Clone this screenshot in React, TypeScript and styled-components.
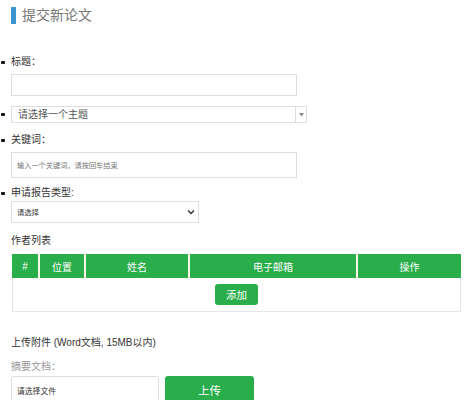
import React from "react";
import styled, { createGlobalStyle } from "styled-components";

const GlobalStyle = createGlobalStyle`
    html, body {
        margin: 0;
        padding: 0;
        background: #fff;
        font-family: "Liberation Sans", "Noto Sans CJK SC", sans-serif;
        color: #333;
    }
`;

const GREEN = "#2aad4b";

const Page = styled.div`
    width: 474px;
    height: 400px;
    overflow: hidden;
    padding: 0 0 0 11px;
    box-sizing: border-box;
`;

const Heading = styled.h2`
    display: flex;
    align-items: center;
    margin: 0;
    padding-top: 6px;
    height: 18px;
    font-size: 14px;
    font-weight: 400;
    color: #777;
    line-height: 18px;
    &::before {
        content: "";
        display: block;
        width: 5px;
        height: 17px;
        background: #3a95cf;
        margin-right: 6px;
    }
`;

const FieldList = styled.ul`
    margin: 29px 0 0 0;
    padding: 0;
    list-style: none;
`;

const Field = styled.li<{ $gap?: number; $dot: number }>`
    position: relative;
    margin-top: ${(p) => p.$gap ?? 0}px;
    &::before {
        content: "";
        position: absolute;
        left: -10px;
        top: ${(p) => p.$dot}px;
        width: 4px;
        height: 3px;
        border-radius: 1px;
        background: #111;
    }
`;

const Label = styled.div<{ $lh?: number }>`
    font-size: 10px;
    line-height: ${(p) => p.$lh ?? 18}px;
    color: #333;
`;

const TextBox = styled.div<{ $h: number; $w: number }>`
    box-sizing: border-box;
    width: ${(p) => p.$w}px;
    height: ${(p) => p.$h}px;
    margin-top: 3px;
    border: 1px solid #ddd;
    display: flex;
    align-items: center;
    padding-left: 5px;
    font-size: 7.2px;
    color: #777;
`;

const ThemeSelect = styled.div`
    box-sizing: border-box;
    width: 296px;
    height: 17px;
    border: 1px solid #ddd;
    display: flex;
    align-items: center;
    font-size: 10px;
    line-height: 15px;
    color: #555;
`;

const ThemeText = styled.span`
    flex: 1;
    padding-left: 6px;
`;

const ThemeArrow = styled.span`
    width: 10px;
    height: 100%;
    border-left: 1px solid #ddd;
    display: flex;
    align-items: center;
    justify-content: center;
`;

const NativeSelect = styled.div`
    box-sizing: border-box;
    width: 188px;
    height: 22px;
    margin-top: 1px;
    border: 1px solid #ddd;
    display: flex;
    align-items: center;
    justify-content: space-between;
    padding: 0 3px 0 5px;
    font-size: 7.3px;
    color: #333;
`;

const Section = styled.div<{ $top: number }>`
    margin-top: ${(p) => p.$top}px;
    font-size: 10px;
    line-height: 16px;
    color: #333;
`;

const Table = styled.div`
    width: 449px;
    margin: 5px 0 0 1px;
    border: 1px solid #e6e6e6;
    border-top: none;
    box-sizing: border-box;
`;

const HeadRow = styled.div`
    display: grid;
    grid-template-columns: 26px 44px 102px 166px 1fr;
    column-gap: 2px;
    background: #f8f6e6;
    height: 24px;
    margin: 0 -1px;
`;

const HeadCell = styled.div`
    background: ${GREEN};
    color: #fff;
    font-size: 10px;
    display: flex;
    align-items: center;
    justify-content: center;
`;

const BodyRow = styled.div`
    height: 33px;
    display: flex;
    align-items: center;
    justify-content: center;
`;

const Button = styled.button<{ $w: number; $h: number; $size: number }>`
    width: ${(p) => p.$w}px;
    height: ${(p) => p.$h}px;
    border: none;
    border-radius: 3px;
    background: ${GREEN};
    color: #fff;
    font-family: inherit;
    font-size: ${(p) => p.$size}px;
    padding: 0;
    cursor: pointer;
`;

const Muted = styled.div`
    margin-top: 8px;
    font-size: 10px;
    line-height: 16px;
    color: #999;
`;

const UploadRow = styled.div`
    display: flex;
    gap: 6px;
    margin-top: 1px;
`;

const FileBox = styled.div`
    box-sizing: border-box;
    width: 148px;
    height: 28px;
    border: 1px solid #ddd;
    border-radius: 3px;
    display: flex;
    align-items: center;
    padding-left: 5px;
    font-size: 7.8px;
    color: #333;
`;

const Chevron = () => (
    <svg width="8" height="6" viewBox="0 0 8 6">
        <path d="M1 1.5 L4 4.5 L7 1.5" fill="none" stroke="#333" strokeWidth="1.4" />
    </svg>
);

const TinyArrow = () => (
    <svg width="5" height="4" viewBox="0 0 5 4">
        <path d="M0 0 H5 L2.5 3.5 Z" fill="#888" />
    </svg>
);

const App = () => {
    return (
        <Page>
            <GlobalStyle />
            <Heading>提交新论文</Heading>
            <FieldList>
                <Field $dot={8}>
                    <Label>标题：</Label>
                    <TextBox $w={286} $h={22} />
                </Field>
                <Field $gap={10} $dot={7}>
                    <ThemeSelect>
                        <ThemeText>请选择一个主题</ThemeText>
                        <ThemeArrow>
                            <TinyArrow />
                        </ThemeArrow>
                    </ThemeSelect>
                </Field>
                <Field $gap={8} $dot={8}>
                    <Label>关键词：</Label>
                    <TextBox $w={286} $h={26}>输入一个关键词，请按回车结束</TextBox>
                </Field>
                <Field $gap={8} $dot={6}>
                    <Label $lh={14}>申请报告类型:</Label>
                    <NativeSelect>
                        <span>请选择</span>
                        <Chevron />
                    </NativeSelect>
                </Field>
            </FieldList>
            <Section $top={10}>作者列表</Section>
            <Table>
                <HeadRow>
                    <HeadCell>#</HeadCell>
                    <HeadCell>位置</HeadCell>
                    <HeadCell>姓名</HeadCell>
                    <HeadCell>电子邮箱</HeadCell>
                    <HeadCell>操作</HeadCell>
                </HeadRow>
                <BodyRow>
                    <Button $w={43} $h={21} $size={10.5}>添加</Button>
                </BodyRow>
            </Table>
            <Section $top={23}>上传附件 (Word文档, 15MB以内)</Section>
            <Muted>摘要文档：</Muted>
            <UploadRow>
                <FileBox>请选择文件</FileBox>
                <Button $w={89} $h={28} $size={11.5}>上传</Button>
            </UploadRow>
        </Page>
    );
};

export default App;
